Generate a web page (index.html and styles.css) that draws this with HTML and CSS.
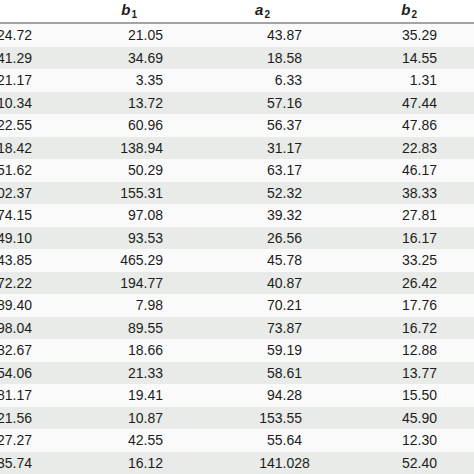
FILE: index.html
```html
<!DOCTYPE html>
<html>
<head>
<meta charset="utf-8">
<link rel="stylesheet" href="styles.css">
</head>
<body>
<div class="table">
  <div class="row head">
    <div class="c c1"></div>
    <div class="c c2"><span class="hd"><span class="hv">b</span><span class="sb">1</span></span></div>
    <div class="c c3"><span class="hd"><span class="hv">a</span><span class="sb">2</span></span></div>
    <div class="c c4"><span class="hd"><span class="hv">b</span><span class="sb">2</span></span></div>
    <div class="c c5"></div>
  </div>
  <div class="row"><div class="c c1">24.72</div><div class="c c2">21.05</div><div class="c c3">43.87</div><div class="c c4">35.29</div><div class="c c5"></div></div>
  <div class="row"><div class="c c1">41.29</div><div class="c c2">34.69</div><div class="c c3">18.58</div><div class="c c4">14.55</div><div class="c c5"></div></div>
  <div class="row"><div class="c c1">21.17</div><div class="c c2">3.35</div><div class="c c3">6.33</div><div class="c c4">1.31</div><div class="c c5"></div></div>
  <div class="row"><div class="c c1">10.34</div><div class="c c2">13.72</div><div class="c c3">57.16</div><div class="c c4">47.44</div><div class="c c5"></div></div>
  <div class="row"><div class="c c1">22.55</div><div class="c c2">60.96</div><div class="c c3">56.37</div><div class="c c4">47.86</div><div class="c c5"></div></div>
  <div class="row"><div class="c c1">18.42</div><div class="c c2">138.94</div><div class="c c3">31.17</div><div class="c c4">22.83</div><div class="c c5"></div></div>
  <div class="row"><div class="c c1">51.62</div><div class="c c2">50.29</div><div class="c c3">63.17</div><div class="c c4">46.17</div><div class="c c5"></div></div>
  <div class="row"><div class="c c1">02.37</div><div class="c c2">155.31</div><div class="c c3">52.32</div><div class="c c4">38.33</div><div class="c c5"></div></div>
  <div class="row"><div class="c c1">74.15</div><div class="c c2">97.08</div><div class="c c3">39.32</div><div class="c c4">27.81</div><div class="c c5"></div></div>
  <div class="row"><div class="c c1">49.10</div><div class="c c2">93.53</div><div class="c c3">26.56</div><div class="c c4">16.17</div><div class="c c5"></div></div>
  <div class="row"><div class="c c1">43.85</div><div class="c c2">465.29</div><div class="c c3">45.78</div><div class="c c4">33.25</div><div class="c c5"></div></div>
  <div class="row"><div class="c c1">72.22</div><div class="c c2">194.77</div><div class="c c3">40.87</div><div class="c c4">26.42</div><div class="c c5"></div></div>
  <div class="row"><div class="c c1">89.40</div><div class="c c2">7.98</div><div class="c c3">70.21</div><div class="c c4">17.76</div><div class="c c5"></div></div>
  <div class="row"><div class="c c1">98.04</div><div class="c c2">89.55</div><div class="c c3">73.87</div><div class="c c4">16.72</div><div class="c c5"></div></div>
  <div class="row"><div class="c c1">82.67</div><div class="c c2">18.66</div><div class="c c3">59.19</div><div class="c c4">12.88</div><div class="c c5"></div></div>
  <div class="row"><div class="c c1">54.06</div><div class="c c2">21.33</div><div class="c c3">58.61</div><div class="c c4">13.77</div><div class="c c5"></div></div>
  <div class="row"><div class="c c1">81.17</div><div class="c c2">19.41</div><div class="c c3">94.28</div><div class="c c4">15.50</div><div class="c c5"></div></div>
  <div class="row"><div class="c c1">21.56</div><div class="c c2">10.87</div><div class="c c3">153.55</div><div class="c c4">45.90</div><div class="c c5"></div></div>
  <div class="row"><div class="c c1">27.27</div><div class="c c2">42.55</div><div class="c c3">55.64</div><div class="c c4">12.30</div><div class="c c5"></div></div>
  <div class="row"><div class="c c1">35.74</div><div class="c c2">16.12</div><div class="c c3"><span class="x3">141.028</span></div><div class="c c4">52.40</div><div class="c c5"></div></div>
</div>
</body>
</html>
```
FILE: styles.css
```css
html, body {
  margin: 0;
  padding: 0;
  background: #ffffff;
  overflow: hidden;
}
body {
  font-family: "Liberation Sans", Arial, sans-serif;
  font-size: 14px;
  color: #1c1c1c;
}
.table {
  display: flex;
  flex-direction: column;
  width: 474px;
}
.row {
  display: grid;
  grid-template-columns: 32px 131px 139px 135px 1fr;
  height: 22.5px;
  align-items: center;
}
.row:nth-child(even) { background: #fafafa; }
.row:nth-child(odd) { background: #e8ebe8; }
.row.head {
  height: 22px;
  background: #ffffff;
  border-bottom: 2px solid #a3a3a3;
  align-items: start;
  font-weight: bold;
}
.c {
  display: flex;
  justify-content: flex-end;
  white-space: nowrap;
  line-height: 16px;
}
.head .c { padding-top: 3px; line-height: 14px; }
.head .c2 { padding-right: 26px; }
.head .c3 { padding-right: 32px; }
.head .c4 { padding-right: 20px; }
.hd { display: inline-block; white-space: nowrap; }
.hv { font-style: italic; font-size: 15px; }
.sb {
  font-size: 10px;
  position: relative;
  top: 3px;
  margin-left: 1px;
}
.x3 { margin-right: -0.556em; }
```
